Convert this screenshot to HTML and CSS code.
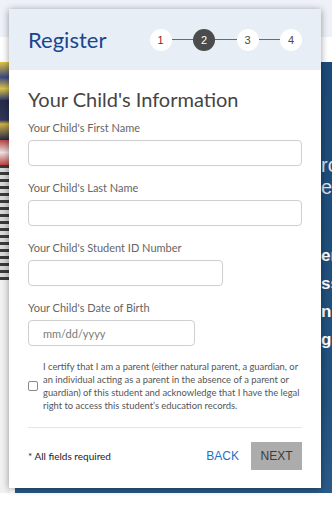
FILE: index.html
```html
<!DOCTYPE html>
<html lang="en">
<head>
<meta charset="utf-8">
<title>Register</title>
<link rel="stylesheet" href="styles.css">
</head>
<body>
<div class="page">
  <div class="topband"></div>
  <div class="hero">
    <div class="strip">
      <div class="blk b1"></div>
      <div class="blk b2"></div>
      <div class="blk b3"></div>
      <div class="blk b4"></div>
      <div class="blk b5"></div>
    </div>
    <div class="panel">
      <div class="light">rc</div>
      <div class="light">er</div>
      <div class="bold first">er</div>
      <div class="bold">ss</div>
      <div class="bold">n p</div>
      <div class="bold">ge</div>
    </div>
  </div>
</div>

<div class="modal">
  <div class="modal-head">
    <h1 class="head-title">Register</h1>
    <div class="steps">
      <span class="step step-done">1</span>
      <span class="step-line"></span>
      <span class="step step-active">2</span>
      <span class="step-line"></span>
      <span class="step">3</span>
      <span class="step-line"></span>
      <span class="step">4</span>
    </div>
  </div>
  <div class="modal-body">
    <h2 class="section-title">Your Child's Information</h2>
    <div class="field">
      <label class="label">Your Child's First Name</label>
      <input class="input input-full" type="text">
    </div>
    <div class="field">
      <label class="label">Your Child's Last Name</label>
      <input class="input input-full" type="text">
    </div>
    <div class="field">
      <label class="label">Your Child's Student ID Number</label>
      <input class="input input-id" type="text">
    </div>
    <div class="field">
      <label class="label">Your Child's Date of Birth</label>
      <input class="input input-date" type="text" placeholder="mm/dd/yyyy">
    </div>
    <div class="certify">
      <span class="checkbox"></span>
      <p class="certify-text">I certify that I am a parent (either natural parent, a guardian, or<br>an individual acting as a parent in the absence of a parent or<br>guardian) of this student and acknowledge that I have the legal<br>right to access this student’s education records.</p>
    </div>
    <div class="divider"></div>
    <div class="footer">
      <span class="required">* All fields required</span>
      <div class="actions">
        <span class="btn-back">BACK</span>
        <span class="btn-next">NEXT</span>
      </div>
    </div>
  </div>
</div>
</body>
</html>
```

FILE: styles.css
```css
* { box-sizing: border-box; }
html, body { margin: 0; padding: 0; }
body {
  width: 332px;
  height: 512px;
  overflow: hidden;
  background: #ffffff;
  font-family: Lato, "Noto Sans", sans-serif;
  position: relative;
}

.page { display: flex; flex-direction: column; }
.topband { height: 37px; background: #eef1f7; margin-bottom: 25px; }
.hero { display: flex; height: 431px; }
.strip { width: 10px; display: flex; flex-direction: column; margin-right: 5px; }
.blk { width: 10px; }
.b1 { height: 38px; background: linear-gradient(#e2c443, #3b4a82 40%, #dcc24a 70%, #2f3b72); }
.b2 { height: 40px; background: linear-gradient(#262b48, #30355a 50%, #cfb045 60%, #24294a); }
.b3 { height: 25px; background: linear-gradient(#b84545, #ece2e2 50%, #bf4343); }
.b4 { height: 115px; background: repeating-linear-gradient(#3a3a3a 0 3px, #d9d9d9 3px 7px); }
.b5 { flex: 1; background: #f1f1f1; }

.panel {
  flex: 1;
  background: linear-gradient(#1c4a78, #22527f 80%, #2a5b88);
  padding: 92px 0 0 306px;
  color: #ffffff;
  font-family: "Liberation Sans", Arial, sans-serif;
  white-space: nowrap;
  overflow: hidden;
}
.light { font-size: 20px; line-height: 22px; opacity: 0.85; }
.bold { font-size: 17px; line-height: 28px; font-weight: bold; }
.bold.first { margin-top: 44px; }

.modal {
  position: absolute;
  left: 9px;
  top: 9px;
  width: 312px;
  height: 479px;
  background: #ffffff;
  box-shadow: 0 1px 7px rgba(0, 0, 0, 0.4);
  display: flex;
  flex-direction: column;
}
.modal-head {
  height: 61px;
  background: #e8eef6;
  display: flex;
  align-items: center;
  justify-content: space-between;
  padding: 0 19px;
}
.head-title {
  margin: 0;
  font-size: 22px;
  font-weight: 400;
  line-height: 26px;
  color: #1a468f;
}
.steps { display: flex; align-items: center; }
.step {
  width: 22px;
  height: 22px;
  border-radius: 50%;
  background: #ffffff;
  color: #4a4a4a;
  font-family: "Liberation Sans", Arial, sans-serif;
  font-size: 11px;
  display: flex;
  align-items: center;
  justify-content: center;
}
.step-done { color: #8c1d1d; }
.step-active { background: #4b4b4b; color: #ffffff; }
.step-line { width: 21.5px; height: 1px; background: #6a6a6a; }

.modal-body { padding: 17px 19px 0 19px; display: flex; flex-direction: column; }
.section-title {
  margin: 0 0 10px 0;
  font-size: 20px;
  line-height: 24px;
  font-weight: 400;
  color: #454545;
}
.field { display: flex; flex-direction: column; margin-bottom: 15px; }
.label {
  font-size: 11px;
  line-height: 14px;
  color: #666666;
  margin-bottom: 5px;
}
.input {
  height: 26px;
  border: 1px solid #cfcfcf;
  border-radius: 4px;
  background: #ffffff;
  padding: 0 14px;
  font-family: Lato, "Noto Sans", sans-serif;
  font-size: 11px;
  color: #333;
  outline: none;
}
.input::placeholder { color: #7a7a7a; }
.input-full { width: 274px; }
.input-id { width: 195px; }
.input-date { width: 167px; }

.certify { display: flex; align-items: center; margin-top: -1px; }
.checkbox {
  width: 10px;
  height: 10px;
  border: 1px solid #8a8a8a;
  border-radius: 2px;
  flex: none;
  margin-right: 5px;
}
.certify-text {
  margin: 0;
  font-size: 9.4px;
  line-height: 13px;
  color: #555555;
  white-space: nowrap;
}
.divider { height: 1px; background: #e6e6e6; margin-top: 15px; }
.footer {
  display: flex;
  align-items: center;
  justify-content: space-between;
  margin-top: 14px;
  height: 28px;
}
.required { font-size: 10px; color: #222222; }
.actions { display: flex; align-items: center; }
.btn-back {
  font-family: "Liberation Sans", Arial, sans-serif;
  font-size: 12px;
  color: #1a73c8;
  margin-right: 12px;
}
.btn-next {
  width: 51px;
  height: 28px;
  background: #acacac;
  color: #3c3c3c;
  font-family: "Liberation Sans", Arial, sans-serif;
  font-size: 12px;
  display: flex;
  align-items: center;
  justify-content: center;
}
```
